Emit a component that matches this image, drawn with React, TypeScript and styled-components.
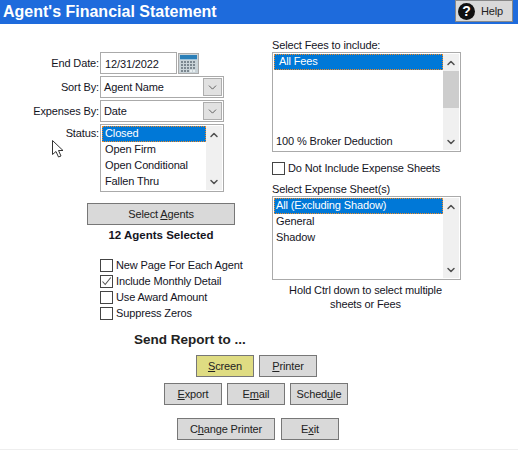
import React from "react";
import styled, { createGlobalStyle } from "styled-components";
import { ChevronDown, ChevronUp } from "lucide-react";

const GlobalStyle = createGlobalStyle`
  html, body {
    margin: 0;
    padding: 0;
    background: #fff;
  }
  body {
    font-family: "Liberation Sans", Arial, sans-serif;
    font-size: 11px;
    letter-spacing: -0.13px;
    color: #14141e;
  }
`;

const Page = styled.div`
  position: relative;
  width: 518px;
  height: 450px;
  overflow: hidden;
  box-sizing: border-box;
  border-bottom: 1px solid #eeeeee;
`;

const Header = styled.header`
  display: flex;
  align-items: flex-start;
  justify-content: space-between;
  height: 24px;
  padding: 0 5px 0 3px;
  background: #1e6bdc;
`;

const Title = styled.h1`
  margin: 0;
  font-size: 16px;
  letter-spacing: 0;
  line-height: 24px;
  font-weight: 700;
  color: #fff;
`;

const HelpButton = styled.button`
  display: flex;
  align-items: center;
  gap: 6px;
  width: 58px;
  height: 22px;
  padding: 0 0 0 2px;
  box-sizing: border-box;
  border: 1px solid #888;
  background: #d9d9d9;
  font: inherit;
  letter-spacing: inherit;
  color: #222;
`;

const HelpMark = styled.span`
  display: flex;
  align-items: center;
  justify-content: center;
  width: 17px;
  height: 17px;
  border-radius: 50%;
  background: #111;
  color: #fff;
  font-size: 14px;
  font-weight: 700;
`;

const Columns = styled.div`
  display: flex;
  height: 306px;
`;

const LeftColumn = styled.div`
  display: flex;
  flex-direction: column;
  width: 272px;
  padding-top: 28px;
  box-sizing: border-box;
`;

const RightColumn = styled.div`
  display: flex;
  flex-direction: column;
  width: 189px;
  padding-top: 15px;
  box-sizing: border-box;
`;

const FormRow = styled.div<{ $top?: boolean }>`
  display: flex;
  align-items: ${(p) => (p.$top ? "flex-start" : "center")};
  height: 22px;
  margin-bottom: 2px;
`;

const FieldLabel = styled.label`
  width: 100px;
  padding-right: 1px;
  box-sizing: border-box;
  text-align: right;
  line-height: 18px;
  white-space: nowrap;
`;

const DateInput = styled.div`
  width: 77px;
  height: 22px;
  box-sizing: border-box;
  padding-left: 4px;
  border: 1px solid #aaa;
  line-height: 22px;
`;

const CalendarButton = styled.div`
  display: flex;
  width: 21px;
  height: 21px;
  margin-left: 1px;
  box-sizing: border-box;
  border: 1px solid #aaa;
  background: #d4d4d4;
`;

const SelectBox = styled.div`
  display: flex;
  align-items: center;
  justify-content: space-between;
  width: 124px;
  height: 22px;
  box-sizing: border-box;
  padding: 0 1px 0 3px;
  border: 1px solid #aaa;
`;

const SelectArrow = styled.span`
  display: flex;
  align-items: center;
  justify-content: center;
  width: 17px;
  height: 16px;
  background: #e1e1e1;
  border: 1px solid #adadad;
  color: #444;
`;

const ListBox = styled.div<{ $width: number; $height: number }>`
  display: flex;
  width: ${(p) => p.$width}px;
  height: ${(p) => p.$height}px;
  box-sizing: border-box;
  padding: 1px;
  border: 1px solid #aaa;
`;

const ListBody = styled.div<{ $spread?: boolean }>`
  display: flex;
  flex: 1;
  flex-direction: column;
  justify-content: ${(p) => (p.$spread ? "space-between" : "flex-start")};
`;

const ListItem = styled.div<{ $selected?: boolean; $indent?: number }>`
  height: 16px;
  box-sizing: border-box;
  padding-left: ${(p) => p.$indent ?? 2}px;
  line-height: 15px;
  white-space: nowrap;
  ${(p) =>
    p.$selected
      ? `background: #0078d7; color: #fff; outline: 1px dotted #f08a24; outline-offset: -1px;`
      : ""}
`;

const ScrollTrack = styled.div`
  display: flex;
  flex-direction: column;
  width: 16px;
  background: #f0f0f0;
  color: #505050;
`;

const ScrollEnd = styled.span`
  display: flex;
  align-items: center;
  justify-content: center;
  height: 17px;
`;

const ScrollSpace = styled.div`
  flex: 1;
`;

const ScrollThumb = styled.div`
  height: 37px;
  background: #cdcdcd;
`;

const WideButton = styled.button`
  width: 148px;
  height: 22px;
  margin: 55px 0 0 87px;
  box-sizing: border-box;
  padding: 0;
  border: 1px solid #777;
  background: #d9d9d9;
  font: inherit;
  letter-spacing: inherit;
  color: #222;
`;

const AgentsSelected = styled.div`
  width: 148px;
  margin: 3px 0 0 87px;
  text-align: center;
  font-size: 11.5px;
  letter-spacing: 0;
  font-weight: 700;
  line-height: 14px;
`;

const OptionList = styled.div`
  display: flex;
  flex-direction: column;
  margin: 15px 0 0 100px;
`;

const CheckRow = styled.label`
  display: flex;
  align-items: center;
  gap: 3px;
  height: 16px;
  white-space: nowrap;
`;

const CheckBox = styled.span`
  display: flex;
  flex: none;
  width: 13px;
  height: 13px;
  border: 1px solid #444;
  box-sizing: border-box;
  background: #fff;
`;

const SectionLabel = styled.div<{ $gap?: number }>`
  height: 13px;
  line-height: 13px;
  margin-top: ${(p) => p.$gap ?? 0}px;
  white-space: nowrap;
`;

const CheckGap = styled.div`
  margin-top: 8px;
`;

const HintText = styled.p`
  margin: 3px 0 0;
  padding-right: 2px;
  text-align: center;
  line-height: 14px;
`;

const SendSection = styled.section`
  display: flex;
  flex-direction: column;
`;

const SendTitle = styled.div`
  margin-left: 134px;
  font-size: 13.5px;
  letter-spacing: 0;
  font-weight: 700;
  line-height: 20px;
  color: #222;
`;

const ButtonRow = styled.div<{ $left: number; $top: number; $gap?: number }>`
  display: flex;
  gap: ${(p) => p.$gap ?? 5}px;
  margin: ${(p) => p.$top}px 0 0 ${(p) => p.$left}px;
`;

const ActionButton = styled.button<{ $active?: boolean; $width?: number }>`
  width: ${(p) => p.$width ?? 58}px;
  height: 22px;
  box-sizing: border-box;
  padding: 0;
  border: 1px solid #777;
  background: ${(p) => (p.$active ? "#dfdc82" : "#d9d9d9")};
  font: inherit;
  letter-spacing: inherit;
  color: #222;
`;

const CursorMark = styled.svg`
  position: absolute;
  left: 51px;
  top: 139px;
`;

const Arrow = ({ up }: { up?: boolean }) => (
  <ScrollEnd>
    {up ? <ChevronUp size={12} strokeWidth={3} /> : <ChevronDown size={12} strokeWidth={3} />}
  </ScrollEnd>
);

const Scrollbar = ({ thumb }: { thumb?: boolean }) => (
  <ScrollTrack>
    <Arrow up />
    {thumb && <ScrollThumb />}
    <ScrollSpace />
    <Arrow />
  </ScrollTrack>
);

const Select = ({ value }: { value: string }) => (
  <SelectBox>
    {value}
    <SelectArrow>
      <ChevronDown size={13} strokeWidth={1.5} />
    </SelectArrow>
  </SelectBox>
);

const Option = ({ label, checked }: { label: string; checked?: boolean }) => (
  <CheckRow>
    <CheckBox>
      {checked && (
        <svg width="11" height="11" viewBox="0 0 11 11">
          <path d="M1.5 5.5 L4.2 8.5 L9.8 1.5" fill="none" stroke="#555" strokeWidth="1.1" />
        </svg>
      )}
    </CheckBox>
    {label}
  </CheckRow>
);

const CalendarIcon = () => (
  <svg width="19" height="19" viewBox="0 0 19 19">
    <rect x="0" y="0" width="19" height="19" fill="#c9d3d8" />
    <rect x="1" y="1" width="17" height="4" fill="#2a7fb8" />
    <rect x="1" y="5" width="17" height="1" fill="#9cc3dc" />
    {[7, 10, 13, 16].map((y) =>
      [2, 5, 8, 11, 14].map((x) => (
        <rect key={`${x}-${y}`} x={x} y={y} width="2" height="2" fill={y === 16 && x > 8 ? "#e8eef0" : "#7b8790"} />
      ))
    )}
  </svg>
);

export default function App() {
  return (
    <Page>
      <GlobalStyle />
      <Header>
        <Title>Agent's Financial Statement</Title>
        <HelpButton>
          <HelpMark>?</HelpMark>
          Help
        </HelpButton>
      </Header>
      <Columns>
        <LeftColumn>
          <FormRow>
            <FieldLabel>End Date:</FieldLabel>
            <DateInput>12/31/2022</DateInput>
            <CalendarButton>
              <CalendarIcon />
            </CalendarButton>
          </FormRow>
          <FormRow>
            <FieldLabel>Sort By:</FieldLabel>
            <Select value="Agent Name" />
          </FormRow>
          <FormRow>
            <FieldLabel>Expenses By:</FieldLabel>
            <Select value="Date" />
          </FormRow>
          <FormRow $top>
            <FieldLabel>Status:</FieldLabel>
            <ListBox $width={124} $height={68}>
              <ListBody>
                <ListItem $selected $indent={3}>Closed</ListItem>
                <ListItem $indent={3}>Open Firm</ListItem>
                <ListItem $indent={3}>Open Conditional</ListItem>
                <ListItem $indent={3}>Fallen Thru</ListItem>
              </ListBody>
              <Scrollbar />
            </ListBox>
          </FormRow>
          <WideButton>
            Select <u>A</u>gents
          </WideButton>
          <AgentsSelected>12 Agents Selected</AgentsSelected>
          <OptionList>
            <Option label="New Page For Each Agent" />
            <Option label="Include Monthly Detail" checked />
            <Option label="Use Award Amount" />
            <Option label="Suppress Zeros" />
          </OptionList>
        </LeftColumn>
        <RightColumn>
          <SectionLabel>Select Fees to include:</SectionLabel>
          <ListBox $width={189} $height={100}>
            <ListBody $spread>
              <ListItem $selected $indent={5}>All Fees</ListItem>
              <ListItem>100 % Broker Deduction</ListItem>
            </ListBody>
            <Scrollbar thumb />
          </ListBox>
          <CheckGap>
            <Option label="Do Not Include Expense Sheets" />
          </CheckGap>
          <SectionLabel $gap={7}>Select Expense Sheet(s)</SectionLabel>
          <ListBox $width={189} $height={84}>
            <ListBody>
              <ListItem $selected>All (Excluding Shadow)</ListItem>
              <ListItem>General</ListItem>
              <ListItem>Shadow</ListItem>
            </ListBody>
            <Scrollbar />
          </ListBox>
          <HintText>
            Hold Ctrl down to select multiple
            <br />
            sheets or Fees
          </HintText>
        </RightColumn>
      </Columns>
      <SendSection>
        <SendTitle>Send Report to ...</SendTitle>
        <ButtonRow $left={196} $top={5}>
          <ActionButton $active><u>S</u>creen</ActionButton>
          <ActionButton><u>P</u>rinter</ActionButton>
        </ButtonRow>
        <ButtonRow $left={164} $top={6}>
          <ActionButton><u>E</u>xport</ActionButton>
          <ActionButton>E<u>m</u>ail</ActionButton>
          <ActionButton>Sched<u>u</u>le</ActionButton>
        </ButtonRow>
        <ButtonRow $left={177} $top={13} $gap={6}>
          <ActionButton $width={98}>C<u>h</u>ange Printer</ActionButton>
          <ActionButton>E<u>x</u>it</ActionButton>
        </ButtonRow>
      </SendSection>
      <CursorMark width="14" height="20" viewBox="0 0 14 20">
        <path d="M1.5 1.5 L1.5 15.5 L5 12.5 L7.5 18 L10 17 L7.5 11.5 L12 11.5 Z" fill="#fff" stroke="#333" strokeWidth="1" />
      </CursorMark>
    </Page>
  );
}
